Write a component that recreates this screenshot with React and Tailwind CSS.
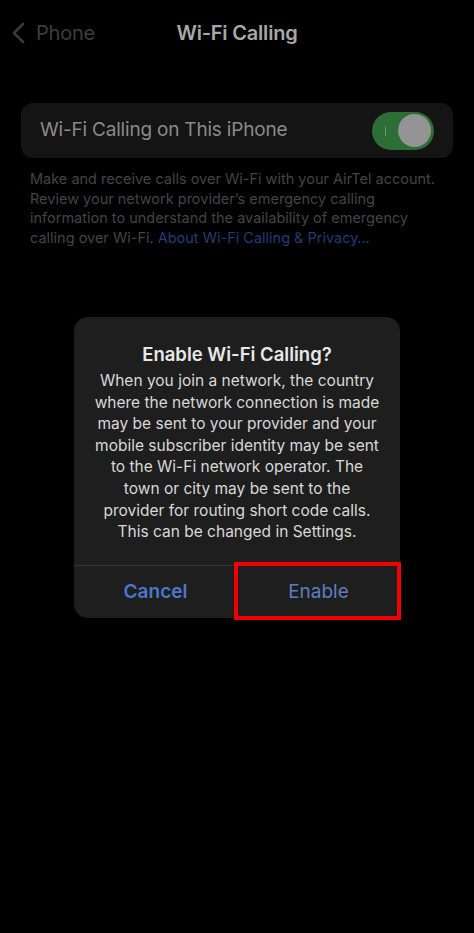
export default function App() {
  return (
    <div
      className="relative w-[474px] h-[933px] bg-black overflow-hidden"
      style={{ fontFamily: 'Inter, "Liberation Sans", sans-serif' }}
    >
      {/* nav bar */}
      <div className="relative flex items-center h-[66px]">
        <div className="flex items-center pl-[11px]">
          <svg width="16" height="22" viewBox="0 0 16 22" fill="none">
            <path d="M12 2 L3 11 L12 20" stroke="#3a3a3a" strokeWidth="2.6" strokeLinecap="round" strokeLinejoin="round" />
          </svg>
          <span className="ml-[9px] text-[20px] text-[#3d3d3d] tracking-[-0.2px]">Phone</span>
        </div>
        <div className="absolute inset-x-0 text-center text-[20px] font-semibold text-[#a8a8a8] tracking-[-0.2px]">
          Wi-Fi Calling
        </div>
      </div>

      {/* setting card */}
      <div className="mt-[37px] mx-[21px] h-[55px] rounded-[12px] bg-[#141414] flex items-center justify-between pl-[19px] pr-[19px]">
        <span className="text-[19px] text-[#8a8a8a] tracking-[-0.2px]">Wi-Fi Calling on This iPhone</span>
        <div className="relative w-[62px] h-[38px] rounded-full bg-[#2d6e36] flex items-center justify-end pr-[3px]">
          <div className="absolute left-[13px] top-[14px] w-[1px] h-[10px] bg-[#5d9a66]" />
          <div className="w-[33px] h-[33px] rounded-full bg-[#939393]" />
        </div>
      </div>

      <p className="mt-[11px] mx-[30px] text-[14.5px] leading-[19.5px] text-[#444444]">
        Make and receive calls over Wi-Fi with your AirTel account. Review your network provider’s emergency calling information to understand the availability of emergency calling over Wi-Fi.{' '}
        <span className="text-[#243c72]">About Wi-Fi Calling &amp; Privacy…</span>
      </p>

      {/* alert */}
      <div className="absolute left-[74px] top-[317px] w-[326px] h-[301px] rounded-[14px] bg-[#1e1e1e] flex flex-col">
        <div className="flex-1 px-[20px] pt-[25px] text-center">
          <div className="text-[18.5px] font-semibold text-[#e8e8e8] leading-[24px]">Enable Wi-Fi Calling?</div>
          <p className="mt-[4px] text-[15.5px] leading-[21.6px] text-[#d8d8d8]">
            When you join a network, the country where the network connection is made may be sent to your provider and your mobile subscriber identity may be sent to the Wi-Fi network operator. The town or city may be sent to the provider for routing short code calls. This can be changed in Settings.
          </p>
        </div>
        <div className="h-[1px] bg-[#353535]" />
        <div className="flex h-[52px]">
          <div className="flex-1 flex items-center justify-center text-[19px] font-semibold text-[#4a78cc]">Cancel</div>
          <div className="flex-1 flex items-center justify-center text-[19px] text-[#5b7fc2]">Enable</div>
        </div>
      </div>

      {/* highlight box */}
      <div className="absolute left-[234px] top-[562px] w-[167px] h-[58px] border-[4px] border-[#f00000]" />
    </div>
  );
}
